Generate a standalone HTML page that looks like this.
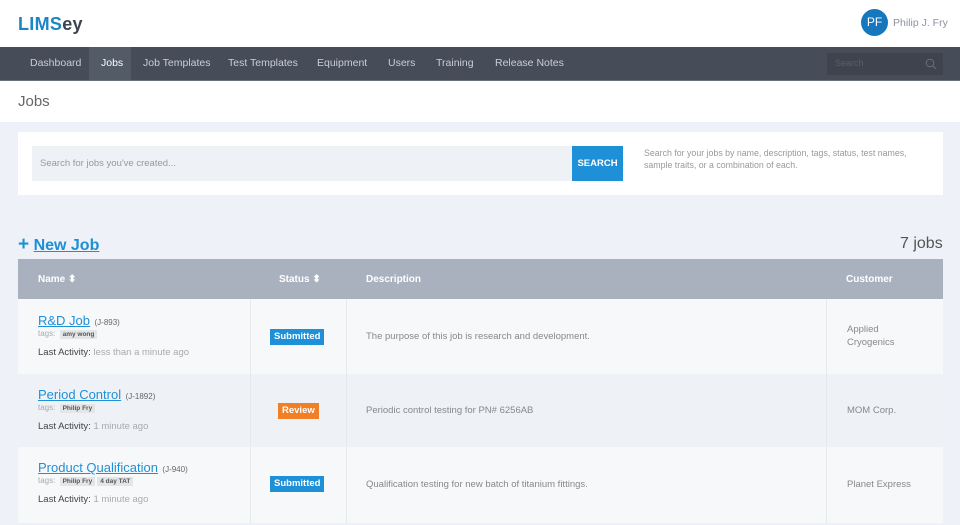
<!DOCTYPE html>
<html><head><meta charset="utf-8"><style>
*{margin:0;padding:0;box-sizing:border-box}
body{width:960px;height:525px;overflow:hidden;background:#eef1f7;font-family:"Liberation Sans",sans-serif;position:relative}
.a{position:absolute;white-space:nowrap}
.nav span{position:absolute;top:47px;height:33px;line-height:33px;font-size:10.5px;color:#c9ced6}
.th{position:absolute;top:274px;font-size:10px;font-weight:bold;color:#fff}
.row{position:absolute;left:18px;width:925px}
.vl{position:absolute;top:0;bottom:0;width:1px;background:#e6e9ee}
.lnk{color:#1e90d8;text-decoration:underline;font-size:13px}
.jid{font-size:8px;color:#666}
.tags{font-size:8px;color:#aaa}
.tag{display:inline-block;background:#e4e5e7;color:#555;font-weight:bold;font-size:6.5px;padding:1px 3px;margin-left:2px}
.la{font-size:9.5px;color:#444}
.la i{font-style:normal;color:#aaa}
.badge{position:absolute;color:#fff;font-weight:bold;font-size:9.5px;padding:2px 4px;line-height:12px}
.desc{position:absolute;left:348px;font-size:9.5px;color:#888}
.cust{position:absolute;left:829px;font-size:9.5px;color:#888;line-height:13px}
</style></head><body>
<div class="a" style="left:0;top:0;width:960px;height:47px;background:#fff"></div>
<div class="a" style="left:18px;top:14px;font-size:18px;font-weight:900;color:#3d4450;letter-spacing:0.3px"><span style="color:#1a86c6">LIMS</span>ey</div>
<div class="a" style="left:861px;top:9px;width:27px;height:27px;border-radius:50%;background:#1677bc;color:#fff;font-size:12px;text-align:center;line-height:27px">PF</div>
<div class="a" style="left:893px;top:17px;font-size:10.5px;color:#8a93a0">Philip J. Fry</div>
<div class="a" style="left:0;top:47px;width:960px;height:34px;background:#474d58;border-bottom:1px solid #6a707a"></div>
<div class="a" style="left:89px;top:47px;width:42px;height:33px;background:#535b67"></div>
<div class="nav">
<span style="left:30px">Dashboard</span><span style="left:101px;color:#fff">Jobs</span><span style="left:143px">Job Templates</span><span style="left:228px">Test Templates</span><span style="left:317px">Equipment</span><span style="left:388px">Users</span><span style="left:436px">Training</span><span style="left:495px">Release Notes</span>
</div>
<div class="a" style="left:827px;top:53px;width:116px;height:22px;background:#3e434d"></div>
<div class="a" style="left:835px;top:58px;font-size:9px;color:#59606b">Search</div>
<svg class="a" style="left:925px;top:58px" width="12" height="12" viewBox="0 0 12 12"><circle cx="5" cy="5" r="3.8" fill="none" stroke="#6a717c" stroke-width="1"/><path d="M8 8L11 11" stroke="#6a717c" stroke-width="1"/></svg>
<div class="a" style="left:0;top:81px;width:960px;height:41px;background:#fff"></div>
<div class="a" style="left:18px;top:93px;font-size:15px;color:#666">Jobs</div>
<div class="a" style="left:18px;top:132px;width:925px;height:63px;background:#fff"></div>
<div class="a" style="left:32px;top:146px;width:540px;height:35px;background:#eef1f6"></div>
<div class="a" style="left:40px;top:158px;font-size:9.5px;color:#999">Search for jobs you've created...</div>
<div class="a" style="left:572px;top:146px;width:51px;height:35px;background:#1e90d8;color:#fff;font-size:9.5px;font-weight:bold;text-align:center;line-height:35px">SEARCH</div>
<div class="a" style="left:644px;top:147px;font-size:8.8px;color:#999;line-height:12px">Search for your jobs by name, description, tags, status, test names,<br>sample traits, or a combination of each.</div>
<div class="a" style="left:18px;top:234px;font-size:16px;font-weight:bold;color:#1e8fd5"><span style="font-size:19px">+</span> <span style="text-decoration:underline">New Job</span></div>
<div class="a" style="left:900px;top:235px;font-size:16px;color:#555">7 jobs</div>
<div class="a" style="left:18px;top:259px;width:925px;height:40px;background:#a9b1bf"></div>
<div class="th" style="left:38px">Name ⬍</div>
<div class="th" style="left:279px">Status ⬍</div>
<div class="th" style="left:366px">Description</div>
<div class="th" style="left:846px">Customer</div>

<div class="row" style="top:299px;height:75px;background:#f7f8f9">
<div class="vl" style="left:232px"></div><div class="vl" style="left:328px"></div><div class="vl" style="left:808px"></div>
<div class="a" style="left:20px;top:13px"><span class="lnk">R&amp;D Job</span> <span class="jid">(J-893)</span></div>
<div class="a tags" style="left:20px;top:30px">tags: <span class="tag">amy wong</span></div>
<div class="a la" style="left:20px;top:48px">Last Activity: <i>less than a minute ago</i></div>
<div class="badge" style="left:252px;top:30px;background:#1e90d8">Submitted</div>
<div class="desc" style="top:32px">The purpose of this job is research and development.</div>
<div class="cust" style="top:24px">Applied<br>Cryogenics</div>
</div>
<div class="row" style="top:374px;height:73px;background:#eef1f6">
<div class="vl" style="left:232px"></div><div class="vl" style="left:328px"></div><div class="vl" style="left:808px"></div>
<div class="a" style="left:20px;top:12px"><span class="lnk">Period Control</span> <span class="jid">(J-1892)</span></div>
<div class="a tags" style="left:20px;top:29px">tags: <span class="tag">Philip Fry</span></div>
<div class="a la" style="left:20px;top:47px">Last Activity: <i>1 minute ago</i></div>
<div class="badge" style="left:260px;top:29px;background:#f07f26">Review</div>
<div class="desc" style="top:31px">Periodic control testing for PN# 6256AB</div>
<div class="cust" style="top:30px">MOM Corp.</div>
</div>
<div class="row" style="top:447px;height:76px;background:#f7f8f9">
<div class="vl" style="left:232px"></div><div class="vl" style="left:328px"></div><div class="vl" style="left:808px"></div>
<div class="a" style="left:20px;top:12px"><span class="lnk">Product Qualification</span> <span class="jid">(J-940)</span></div>
<div class="a tags" style="left:20px;top:29px">tags: <span class="tag">Philip Fry</span><span class="tag">4 day TAT</span></div>
<div class="a la" style="left:20px;top:47px">Last Activity: <i>1 minute ago</i></div>
<div class="badge" style="left:252px;top:29px;background:#1e90d8">Submitted</div>
<div class="desc" style="top:32px">Qualification testing for new batch of titanium fittings.</div>
<div class="cust" style="top:31px">Planet Express</div>
</div>
</body></html>
